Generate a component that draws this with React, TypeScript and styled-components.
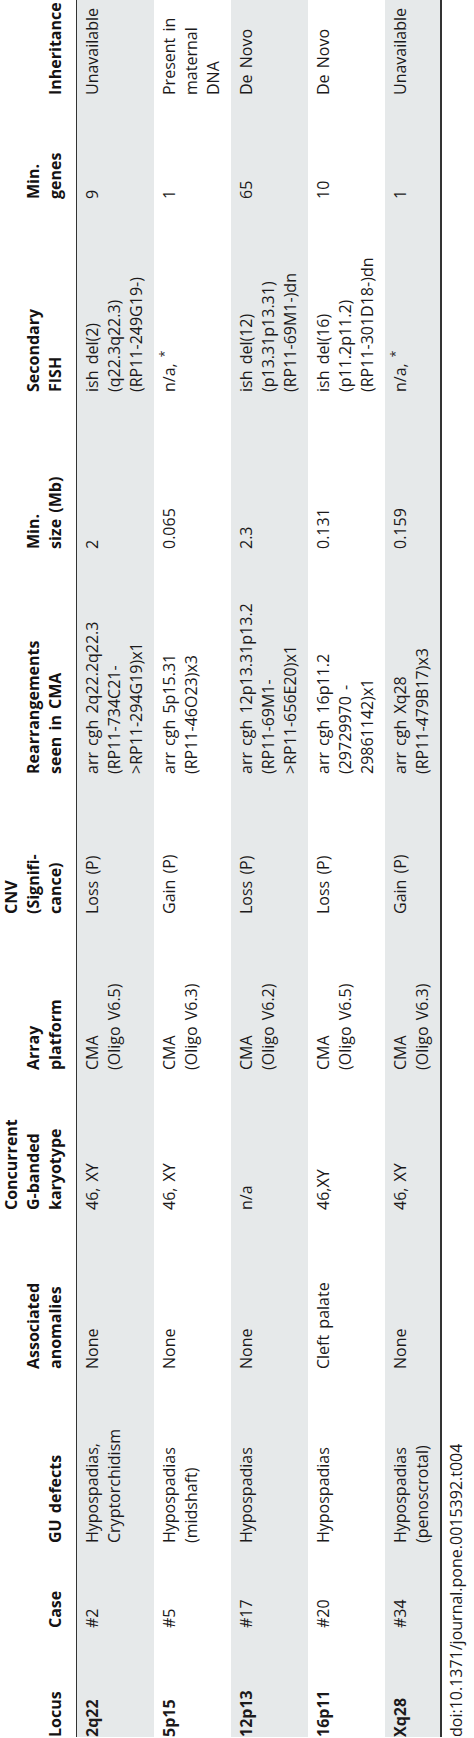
import React from 'react';
import styled, { createGlobalStyle } from 'styled-components';

const GlobalStyle = createGlobalStyle`
  html, body {
    margin: 0;
    padding: 0;
    background: #ffffff;
  }
  body {
    font-family: 'Open Sans', 'Noto Sans', 'Liberation Sans', sans-serif;
    color: #1c1a1b;
  }
`;

// the printed table is turned a quarter turn, so the sheet is laid out
// landscape and rotated into the portrait page
const Page = styled.div`
  width: 474px;
  height: 1738px;
  overflow: hidden;
  position: relative;
`;

const Sheet = styled.div`
  width: 1738px;
  height: 474px;
  transform-origin: top left;
  transform: translateY(1738px) rotate(-90deg);
`;

const Table = styled.table`
  border-collapse: collapse;
  table-layout: fixed;
  width: 1740px;
  margin: -3px 0 0 -2px;
  font-size: 16px;
  line-height: 22px;
  word-spacing: 2px;
`;

const HeadCell = styled.th`
  text-align: left;
  vertical-align: bottom;
  font-weight: 700;
  padding: 0 0 10px 0;
  white-space: nowrap;
  border-bottom: 1.5px solid #333333;
  color: #141213;
`;

const Row = styled.tr<{ $shaded: boolean }>`
  background-color: ${(props) => (props.$shaded ? '#e6e9ea' : 'transparent')};
  &:last-child td {
    border-bottom: 2px solid #333333;
  }
`;

const Cell = styled.td<{ $bold?: boolean }>`
  vertical-align: top;
  padding: 4px 0 7px 0;
  white-space: nowrap;
  font-weight: ${(props) => (props.$bold ? 700 : 400)};
`;

const Star = styled.sup`
  font-size: 12px;
  line-height: 0;
  vertical-align: 6px;
`;

const Caption = styled.div`
  margin: 3px 0 0 -2px;
  font-size: 16px;
  line-height: 22px;
  white-space: nowrap;
`;

const widths = [109, 85, 174, 159, 140, 156, 140, 225, 157, 193, 104, 98];

const headers = [
  ['Locus'],
  ['Case'],
  ['GU defects'],
  ['Associated', 'anomalies'],
  ['Concurrent', 'G-banded', 'karyotype'],
  ['Array', 'platform'],
  ['CNV', '(Signifi-', 'cance)'],
  ['Rearrangements', 'seen in CMA'],
  ['Min.', 'size (Mb)'],
  ['Secondary', 'FISH'],
  ['Min.', 'genes'],
  ['Inheritance'],
];

const STAR = 'n/a, *';

const rows: string[][][] = [
  [
    ['2q22'],
    ['#2'],
    ['Hypospadias,', 'Cryptorchidism'],
    ['None'],
    ['46, XY'],
    ['CMA', '(Oligo V6.5)'],
    ['Loss (P)'],
    ['arr cgh 2q22.2q22.3', '(RP11-734C21-', '>RP11-294G19)x1'],
    ['2'],
    ['ish del(2)', '(q22.3q22.3)', '(RP11-249G19-)'],
    ['9'],
    ['Unavailable'],
  ],
  [
    ['5p15'],
    ['#5'],
    ['Hypospadias', '(midshaft)'],
    ['None'],
    ['46, XY'],
    ['CMA', '(Oligo V6.3)'],
    ['Gain (P)'],
    ['arr cgh 5p15.31', '(RP11-46O23)x3'],
    ['0.065'],
    [STAR],
    ['1'],
    ['Present in', 'maternal', 'DNA'],
  ],
  [
    ['12p13'],
    ['#17'],
    ['Hypospadias'],
    ['None'],
    ['n/a'],
    ['CMA', '(Oligo V6.2)'],
    ['Loss (P)'],
    ['arr cgh 12p13.31p13.2', '(RP11-69M1-', '>RP11-656E20)x1'],
    ['2.3'],
    ['ish del(12)', '(p13.31p13.31)', '(RP11-69M1-)dn'],
    ['65'],
    ['De Novo'],
  ],
  [
    ['16p11'],
    ['#20'],
    ['Hypospadias'],
    ['Cleft palate'],
    ['46,XY'],
    ['CMA', '(Oligo V6.5)'],
    ['Loss (P)'],
    ['arr cgh 16p11.2', '(29729970 -', '29861142)x1'],
    ['0.131'],
    ['ish del(16)', '(p11.2p11.2)', '(RP11-301D18-)dn'],
    ['10'],
    ['De Novo'],
  ],
  [
    ['Xq28'],
    ['#34'],
    ['Hypospadias', '(penoscrotal)'],
    ['None'],
    ['46, XY'],
    ['CMA', '(Oligo V6.3)'],
    ['Gain (P)'],
    ['arr cgh Xq28', '(RP11-479B17)x3'],
    ['0.159'],
    [STAR],
    ['1'],
    ['Unavailable'],
  ],
];

function Lines({ lines }: { lines: string[] }) {
  return (
    <>
      {lines.map((line, i) => (
        <React.Fragment key={i}>
          {i > 0 && <br />}
          {line === STAR ? (
            <>
              n/a, <Star>*</Star>
            </>
          ) : (
            line
          )}
        </React.Fragment>
      ))}
    </>
  );
}

function App() {
  return (
    <>
      <GlobalStyle />
      <Page>
        <Sheet>
          <Table>
            <colgroup>
              {widths.map((w, i) => (
                <col key={i} style={{ width: w }} />
              ))}
            </colgroup>
            <thead>
              <tr>
                {headers.map((h, i) => (
                  <HeadCell key={i}>
                    <Lines lines={h} />
                  </HeadCell>
                ))}
              </tr>
            </thead>
            <tbody>
              {rows.map((row, r) => (
                <Row key={r} $shaded={r % 2 === 0}>
                  {row.map((cell, c) => (
                    <Cell key={c} $bold={c === 0}>
                      <Lines lines={cell} />
                    </Cell>
                  ))}
                </Row>
              ))}
            </tbody>
          </Table>
          <Caption>doi:10.1371/journal.pone.0015392.t004</Caption>
        </Sheet>
      </Page>
    </>
  );
}

export default App;
